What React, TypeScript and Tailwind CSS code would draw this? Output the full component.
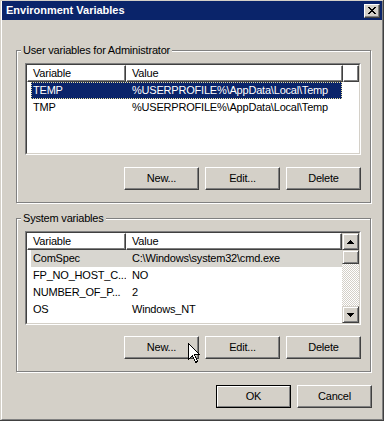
import React from "react";

const F = "font-['Liberation_Sans',Arial,sans-serif] text-[11px] tracking-[-0.2px] text-black";

function Btn({ label, def }: { label: string; def?: boolean }) {
  if (def) {
    return (
      <div className="w-[75px] h-[23px] border border-black">
        <div className="h-full border border-t-white border-l-white border-r-[#808080] border-b-[#808080] flex items-center justify-center">
          {label}
        </div>
      </div>
    );
  }
  return (
    <div className="w-[75px] h-[23px] border border-t-white border-l-white border-r-[#404040] border-b-[#404040] shadow-[inset_-1px_-1px_0_#808080] flex items-center justify-center">
      {label}
    </div>
  );
}

function Hdr({ label, w, grow }: { label?: string; w?: string; grow?: boolean }) {
  return (
    <div
      className={`${w ?? ""} ${grow ? "flex-1" : ""} h-[17px] border border-t-white border-l-white border-r-[#404040] border-b-[#404040] shadow-[inset_-1px_-1px_0_#808080] flex items-center pl-[5px] overflow-hidden whitespace-nowrap`}
    >
      {label}
    </div>
  );
}

function Arrow({ down }: { down?: boolean }) {
  return (
    <svg width="7" height="4" viewBox="0 0 7 4" shapeRendering="crispEdges" className={down ? "rotate-180" : ""}>
      <rect x="3" y="0" width="1" height="1" fill="#000" />
      <rect x="2" y="1" width="3" height="1" fill="#000" />
      <rect x="1" y="2" width="5" height="1" fill="#000" />
      <rect x="0" y="3" width="7" height="1" fill="#000" />
    </svg>
  );
}

function ScrollBtn({ children, h }: { children?: React.ReactNode; h: string }) {
  return (
    <div className={`w-[17px] ${h} border border-t-[#d4d0c8] border-l-[#d4d0c8] border-r-[#404040] border-b-[#404040] shadow-[inset_1px_1px_0_#fff,inset_-1px_-1px_0_#808080] bg-[#d4d0c8] flex items-center justify-center`}>
      {children}
    </div>
  );
}

type Row = { n: string; v: string; sel?: "focus" | "gray" };

function Rows({ rows }: { rows: Row[] }) {
  return (
    <div className="flex flex-col">
      {rows.map((r, i) => (
        <div key={i} className="h-[17px] pl-[4px] flex whitespace-nowrap">
          <div
            className={`w-[311px] flex items-center ${
              r.sel === "focus"
                ? "bg-[#0a246a] text-white outline-1 outline-dotted outline-[#e8e0a0] -outline-offset-1"
                : r.sel === "gray"
                ? "bg-[#d8d6d0]"
                : ""
            }`}
          >
            <div className="w-[95px] pl-[2px] overflow-hidden">{r.n}</div>
            <div className="pl-[6px]">{r.v}</div>
          </div>
        </div>
      ))}
    </div>
  );
}

function ListFrame({ h, children }: { h: string; children: React.ReactNode }) {
  return (
    <div className={`w-[336px] ${h} border border-t-[#808080] border-l-[#808080] border-r-white border-b-white`}>
      <div className="h-full border border-t-[#404040] border-l-[#404040] border-r-[#d4d0c8] border-b-[#d4d0c8] bg-white overflow-hidden">
        {children}
      </div>
    </div>
  );
}

function Group({ title, children, cls }: { title: string; children: React.ReactNode; cls?: string }) {
  return (
    <div className={`relative ml-[14px] w-[355px] border border-[#808080] shadow-[inset_1px_1px_0_#fff,1px_1px_0_#fff] pt-[12px] pb-[12px] pl-[8px] ${cls ?? ""}`}>
      <span className="absolute left-[4px] top-[-7px] px-[2px] leading-[13px] bg-[#d4d0c8]">{title}</span>
      {children}
    </div>
  );
}

export default function App() {
  const userRows: Row[] = [
    { n: "TEMP", v: "%USERPROFILE%\\AppData\\Local\\Temp", sel: "focus" },
    { n: "TMP", v: "%USERPROFILE%\\AppData\\Local\\Temp" },
  ];
  const sysRows: Row[] = [
    { n: "ComSpec", v: "C:\\Windows\\system32\\cmd.exe", sel: "gray" },
    { n: "FP_NO_HOST_C...", v: "NO" },
    { n: "NUMBER_OF_P...", v: "2" },
    { n: "OS", v: "Windows_NT" },
  ];
  return (
    <div className={`${F} relative w-[384px] h-[421px] overflow-hidden bg-[#d4d0c8] pl-px pt-px border-r border-b border-[#404040] flex flex-col`}>
      <div className="flex-1 flex flex-col border-l border-l-white border-r border-r-[#808080] border-b border-b-[#808080]">
        {/* Title bar */}
        <div className="h-[19px] bg-[#0a246a] flex items-center justify-between pl-[4px] pr-[2px]">
          <span className="text-white font-bold tracking-normal">Environment Variables</span>
          <div className="w-[16px] h-[14px] border border-t-white border-l-white border-r-[#404040] border-b-[#404040] shadow-[inset_-1px_-1px_0_#808080] bg-[#d4d0c8] flex items-center justify-center">
            <svg width="8" height="7" viewBox="0 0 8 7" shapeRendering="crispEdges">
              <path d="M0 0h2v1H0zM6 0h2v1H6zM1 1h2v1H1zM5 1h2v1H5zM2 2h4v1H2zM3 3h2v1H3zM2 4h4v1H2zM1 5h2v1H1zM5 5h2v1H5zM0 6h2v1H0zM6 6h2v1H6z" fill="#000" />
            </svg>
          </div>
        </div>

        {/* User variables */}
        <Group title="User variables for Administrator" cls="mt-[30px]">
          <ListFrame h="h-[92px]">
            <div className="flex">
              <Hdr label="Variable" w="w-[99px]" />
              <Hdr label="Value" w="w-[217px]" />
              <Hdr grow />
            </div>
            <Rows rows={userRows} />
          </ListFrame>
          <div className="w-[336px] flex justify-end gap-[6px] mt-[12px]">
            <Btn label="New..." />
            <Btn label="Edit..." />
            <Btn label="Delete" />
          </div>
        </Group>

        {/* System variables */}
        <Group title="System variables" cls="mt-[15px]">
          <ListFrame h="h-[94px]">
            <div className="flex h-full">
              <div className="flex-1 overflow-hidden">
                <div className="flex">
                  <Hdr label="Variable" w="w-[99px]" />
                  <Hdr label="Value" grow />
                </div>
                <Rows rows={sysRows} />
              </div>
              <div className="w-[17px] h-full flex flex-col">
                <ScrollBtn h="h-[17px]">
                  <Arrow />
                </ScrollBtn>
                <ScrollBtn h="h-[14px]" />
                <div className="flex-1 bg-[conic-gradient(#fff_25%,#d4d0c8_0_50%,#fff_0_75%,#d4d0c8_0)] bg-[length:2px_2px]" />
                <ScrollBtn h="h-[17px]">
                  <Arrow down />
                </ScrollBtn>
              </div>
            </div>
          </ListFrame>
          <div className="w-[336px] flex justify-end gap-[6px] mt-[11px]">
            <Btn label="New..." />
            <Btn label="Edit..." />
            <Btn label="Delete" />
          </div>
        </Group>

        <div className="ml-[14px] w-[356px] flex justify-end gap-[6px] mt-[13px]">
          <Btn label="OK" def />
          <Btn label="Cancel" />
        </div>
      </div>

      {/* mouse cursor */}
      <svg className="absolute left-[188px] top-[343px]" width="12" height="20" viewBox="0 0 12 20" shapeRendering="crispEdges">
        <path d="M0.5 0.5 L0.5 16.5 L4.5 12.5 L7.5 19.5 L9.5 18.5 L6.5 11.5 L11.5 11.5 Z" fill="#fff" stroke="#000" strokeWidth="1" />
      </svg>
    </div>
  );
}
